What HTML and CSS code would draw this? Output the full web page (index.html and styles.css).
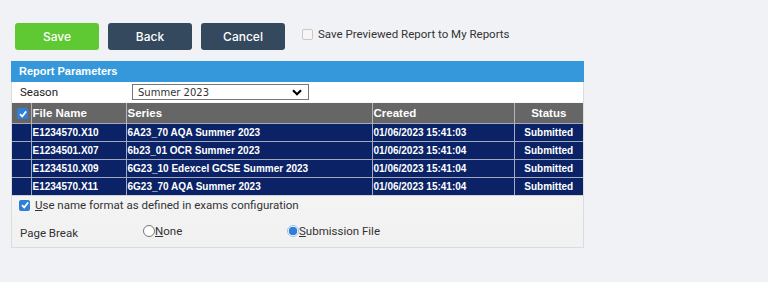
FILE: index.html
```html
<!DOCTYPE html>
<html>
<head>
<meta charset="utf-8">
<link rel="stylesheet" href="styles.css">
</head>
<body>
<div class="toolbar">
  <button class="btn btn-save">Save</button>
  <button class="btn btn-dark">Back</button>
  <button class="btn btn-dark">Cancel</button>
  <label class="save-opt"><span class="cb"></span>Save Previewed Report to My Reports</label>
</div>
<div class="panel">
  <div class="panel-head">Report Parameters</div>
  <div class="season-row">
    <span class="season-label">Season</span>
    <div class="select"><span>Summer 2023</span>
      <svg class="chev" width="10" height="7" viewBox="0 0 10 7"><path d="M1 1.2 L5 5.2 L9 1.2" fill="none" stroke="#000" stroke-width="2.2"/></svg>
    </div>
  </div>
  <table class="grid">
    <colgroup>
      <col class="w-chk"><col class="w-file"><col class="w-series"><col class="w-created"><col class="w-status">
    </colgroup>
    <thead>
      <tr>
        <th class="c-chk"><span class="cbx"><svg width="10" height="10" viewBox="0 0 10 10"><path d="M2 5.2 L4.2 7.4 L8.2 2.4" fill="none" stroke="#fff" stroke-width="1.7"/></svg></span></th>
        <th>File Name</th>
        <th>Series</th>
        <th>Created</th>
        <th class="c-status">Status</th>
      </tr>
    </thead>
    <tbody>
      <tr><td></td><td>E1234570.X10</td><td>6A23_70 AQA Summer 2023</td><td>01/06/2023 15:41:03</td><td class="st">Submitted</td></tr>
      <tr><td></td><td>E1234501.X07</td><td>6b23_01 OCR Summer 2023</td><td>01/06/2023 15:41:04</td><td class="st">Submitted</td></tr>
      <tr><td></td><td>E1234510.X09</td><td>6G23_10 Edexcel GCSE Summer 2023</td><td>01/06/2023 15:41:04</td><td class="st">Submitted</td></tr>
      <tr><td></td><td>E1234570.X11</td><td>6G23_70 AQA Summer 2023</td><td>01/06/2023 15:41:04</td><td class="st">Submitted</td></tr>
    </tbody>
  </table>
  <div class="options">
    <label class="fmt"><span class="cbx big"><svg width="10" height="10" viewBox="0 0 10 10"><path d="M2 5.2 L4.2 7.4 L8.2 2.4" fill="none" stroke="#fff" stroke-width="1.7"/></svg></span><u>U</u>se name format as defined in exams configuration</label>
    <div class="pb-row">
      <span class="pb-label">Page Break</span>
      <label class="radio r-none"><span class="rd"></span><u>N</u>one</label>
      <label class="radio r-sub"><span class="rd on"></span><u>S</u>ubmission File</label>
    </div>
  </div>
</div>
</body>
</html>
```

FILE: styles.css
```css
html, body {
  margin: 0;
  padding: 0;
  background: #f1f2f6;
  width: 768px;
  height: 282px;
  overflow: hidden;
  font-family: Roboto, Inter, sans-serif;
}
.toolbar {
  display: flex;
  align-items: center;
  padding: 23px 0 0 15px;
  height: 27px;
}
.btn {
  height: 27px;
  border: none;
  border-radius: 3px;
  color: #fff;
  font-family: Inter, sans-serif;
  font-size: 12px;
  font-weight: 500;
  padding: 0;
  margin-right: 9px;
}
.btn-save { width: 84px; background: #5ec932; }
.btn-dark { width: 84px; background: #34495e; }
.save-opt {
  display: flex;
  align-items: center;
  margin-left: 8px;
  margin-top: -5px;
  font-size: 11.5px;
  color: #333;
}
.cb {
  width: 9px;
  height: 9px;
  border: 1px solid #c8c8c8;
  border-radius: 2px;
  background: #f6f6f6;
  margin-right: 5px;
}
.panel {
  margin: 11px 0 0 11px;
  width: 571px;
  border: 1px solid #dcdcdc;
  border-top: none;
  background: linear-gradient(#fafafa, #f1f1f1);
}
.panel-head {
  background: #3498db;
  color: #fff;
  font-family: "Liberation Sans", sans-serif;
  font-weight: bold;
  font-size: 11px;
  height: 21px;
  line-height: 21px;
  padding-left: 8px;
  margin: 0 -1px;
}
.season-row {
  display: flex;
  align-items: center;
  height: 20px;
  background: #fff;
}
.season-label {
  width: 112px;
  padding-left: 8px;
  font-size: 11.5px;
  color: #222;
}
.select {
  width: 164px;
  height: 14px;
  border: 1px solid #777;
  display: flex;
  align-items: center;
  justify-content: space-between;
  padding: 0 6px 0 5px;
  font-family: "DejaVu Sans", sans-serif;
  font-size: 10px;
  color: #333;
  box-sizing: content-box;
}
.chev { margin-top: 1px; }
.grid {
  border-collapse: collapse;
  width: 571px;
  table-layout: fixed;
  margin-top: 1px;
}
.w-chk { width: 19px; }
.w-file { width: 95px; }
.w-series { width: 246px; }
.w-created { width: 142px; }
.w-status { width: 69px; }
.grid th {
  background: #666;
  color: #fff;
  font-family: "Liberation Sans", sans-serif;
  font-weight: bold;
  font-size: 11.5px;
  text-align: left;
  height: 20px;
  padding: 0 1px;
  border-left: 1px solid #b5b5b5;
}
.grid th:first-child { border-left: none; }
.grid th.c-chk { text-align: center; padding: 0 0 0 3px; }
.grid th.c-status { text-align: center; }
.grid td {
  background: #0b2366;
  color: #fff;
  font-family: "Liberation Sans", sans-serif;
  font-weight: bold;
  font-size: 10px;
  height: 17px;
  padding: 0 1px;
  border: 1px solid #a3aabd;
  border-right: none;
  border-bottom: none;
}
.grid td:first-child { border-left: none; }
.grid td.st { text-align: center; }
.cbx {
  display: inline-flex;
  align-items: center;
  justify-content: center;
  width: 11px;
  height: 11px;
  border-radius: 2px;
  background: #2f7fd6;
  vertical-align: middle;
}
.options {
  border-top: 1px solid #cfd3dc;
  padding: 2px 0 0 7px;
  height: 49px;
}
.fmt {
  display: flex;
  align-items: center;
  font-size: 11.5px;
  color: #333;
}
.cbx.big { width: 11px; height: 11px; margin-right: 5px; }
.pb-row {
  display: flex;
  align-items: center;
  margin-top: 10px;
  font-size: 11.5px;
  color: #333;
}
.pb-label { width: 123px; margin-top: 4px; padding-left: 1px; }
.radio { display: flex; align-items: center; }
.r-none { width: 144px; }
.rd {
  width: 10px;
  height: 10px;
  border-radius: 50%;
  border: 1px solid #777;
  background: #fff;
  box-sizing: content-box;
}
.rd.on {
  border: 1px solid #9cc2ea;
  background: radial-gradient(circle, #2f7fd6 0 4px, #fff 4.6px);
}
```
